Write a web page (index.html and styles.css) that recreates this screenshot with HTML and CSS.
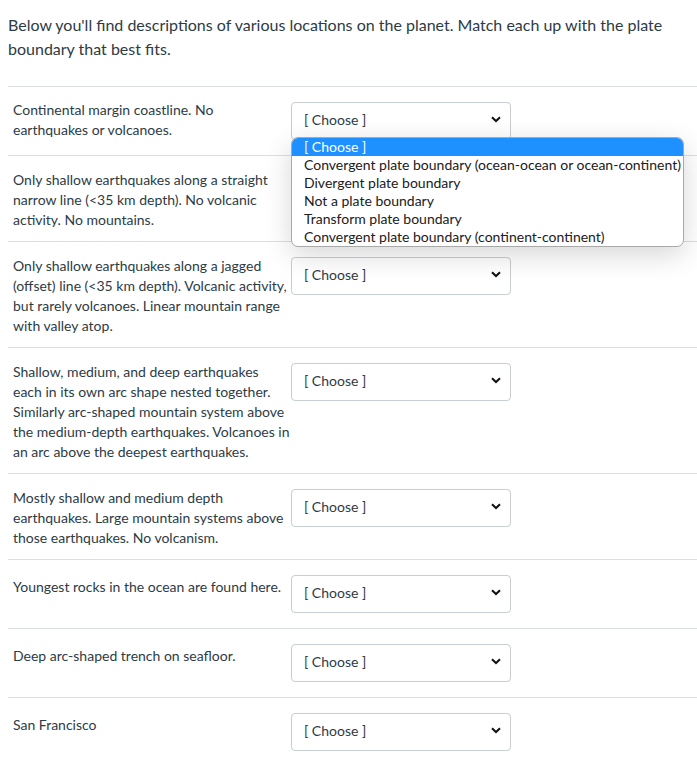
FILE: index.html
```html
<!DOCTYPE html>
<html lang="en">
<head>
<meta charset="utf-8">
<title>Plate boundaries</title>
<link rel="stylesheet" href="styles.css">
</head>
<body>
<div class="page">
  <p class="intro">Below you'll find descriptions of various locations on the planet. Match each up with the plate boundary that best fits.</p>

  <div class="row">
    <div class="desc desc-two">Continental margin coastline. No earthquakes or volcanoes.</div>
    <div class="answer">
      <div class="select">
        <span class="select-text">[ Choose ]</span>
        <svg class="chev" width="10" height="7" viewBox="0 0 10 7"><path d="M1 1.2 L5 5 L9 1.2" fill="none" stroke="#111" stroke-width="2"/></svg>
        <ul class="menu">
          <li class="opt active">[ Choose ]</li>
          <li class="opt">Convergent plate boundary (ocean-ocean or ocean-continent)</li>
          <li class="opt">Divergent plate boundary</li>
          <li class="opt">Not a plate boundary</li>
          <li class="opt">Transform plate boundary</li>
          <li class="opt">Convergent plate boundary (continent-continent)</li>
        </ul>
      </div>
    </div>
  </div>

  <div class="row">
    <div class="desc">Only shallow earthquakes along a straight narrow line (&lt;35 km depth). No volcanic activity. No mountains.</div>
    <div class="answer">
      <div class="select">
        <span class="select-text">[ Choose ]</span>
        <svg class="chev" width="10" height="7" viewBox="0 0 10 7"><path d="M1 1.2 L5 5 L9 1.2" fill="none" stroke="#111" stroke-width="2"/></svg>
      </div>
    </div>
  </div>

  <div class="row">
    <div class="desc">Only shallow earthquakes along a jagged (offset) line (&lt;35 km depth). Volcanic activity, but rarely volcanoes. Linear mountain range with valley atop.</div>
    <div class="answer">
      <div class="select">
        <span class="select-text">[ Choose ]</span>
        <svg class="chev" width="10" height="7" viewBox="0 0 10 7"><path d="M1 1.2 L5 5 L9 1.2" fill="none" stroke="#111" stroke-width="2"/></svg>
      </div>
    </div>
  </div>

  <div class="row">
    <div class="desc">Shallow, medium, and deep earthquakes each in its own arc shape nested together. Similarly arc-shaped mountain system above the medium-depth earthquakes. Volcanoes in an arc above the deepest earthquakes.</div>
    <div class="answer">
      <div class="select">
        <span class="select-text">[ Choose ]</span>
        <svg class="chev" width="10" height="7" viewBox="0 0 10 7"><path d="M1 1.2 L5 5 L9 1.2" fill="none" stroke="#111" stroke-width="2"/></svg>
      </div>
    </div>
  </div>

  <div class="row">
    <div class="desc">Mostly shallow and medium depth earthquakes. Large mountain systems above those earthquakes. No volcanism.</div>
    <div class="answer">
      <div class="select">
        <span class="select-text">[ Choose ]</span>
        <svg class="chev" width="10" height="7" viewBox="0 0 10 7"><path d="M1 1.2 L5 5 L9 1.2" fill="none" stroke="#111" stroke-width="2"/></svg>
      </div>
    </div>
  </div>

  <div class="row">
    <div class="desc desc-one">Youngest rocks in the ocean are found here.</div>
    <div class="answer">
      <div class="select">
        <span class="select-text">[ Choose ]</span>
        <svg class="chev" width="10" height="7" viewBox="0 0 10 7"><path d="M1 1.2 L5 5 L9 1.2" fill="none" stroke="#111" stroke-width="2"/></svg>
      </div>
    </div>
  </div>

  <div class="row">
    <div class="desc desc-one">Deep arc-shaped trench on seafloor.</div>
    <div class="answer">
      <div class="select">
        <span class="select-text">[ Choose ]</span>
        <svg class="chev" width="10" height="7" viewBox="0 0 10 7"><path d="M1 1.2 L5 5 L9 1.2" fill="none" stroke="#111" stroke-width="2"/></svg>
      </div>
    </div>
  </div>

  <div class="row">
    <div class="desc desc-one">San Francisco</div>
    <div class="answer">
      <div class="select">
        <span class="select-text">[ Choose ]</span>
        <svg class="chev" width="10" height="7" viewBox="0 0 10 7"><path d="M1 1.2 L5 5 L9 1.2" fill="none" stroke="#111" stroke-width="2"/></svg>
      </div>
    </div>
  </div>
</div>
</body>
</html>
```

FILE: styles.css
```css
html, body {
  margin: 0;
  padding: 0;
  background: #fff;
}

body {
  font-family: "Lato", "Open Sans", sans-serif;
  color: #2d3b45;
}

.page {
  padding-left: 8px;
}

.intro {
  margin: 0;
  padding-top: 13px;
  padding-right: 20px;
  font-size: 16px;
  line-height: 24px;
  height: 73px;
}

.row {
  display: flex;
  align-items: flex-start;
  border-top: 1px solid #dcdfe2;
}

.desc {
  box-sizing: border-box;
  width: 283px;
  flex: none;
  padding: 14px 0 11px 5px;
  font-size: 14px;
  line-height: 20px;
}

.desc-two {
  padding-top: 13px;
}

.desc-one {
  padding-top: 17px;
}

.answer {
  padding: 15px 0 15px 0;
}

.select {
  position: relative;
  box-sizing: border-box;
  width: 220px;
  height: 38px;
  border: 1px solid #c7cdd1;
  border-radius: 4px;
  background: #fff;
  display: flex;
  align-items: center;
  justify-content: space-between;
  padding: 0 9px 4px 12px;
  font-size: 14px;
}

.select-text {
  color: #2d3b45;
}

.chev {
  display: block;
}

.menu {
  position: absolute;
  left: -1px;
  top: 34px;
  width: 393px;
  box-sizing: border-box;
  margin: 0;
  padding: 0;
  list-style: none;
  background: #fff;
  border: 1px solid #a9a9a9;
  border-radius: 7px;
  overflow: hidden;
  box-shadow: 0 8px 28px rgba(0, 0, 0, 0.16);
  z-index: 10;
}

.opt {
  height: 18px;
  line-height: 18px;
  padding-left: 12px;
  font-size: 14px;
  color: #202020;
  white-space: nowrap;
}

.opt.active {
  background: #1e90ff;
  color: #fff;
}
```
